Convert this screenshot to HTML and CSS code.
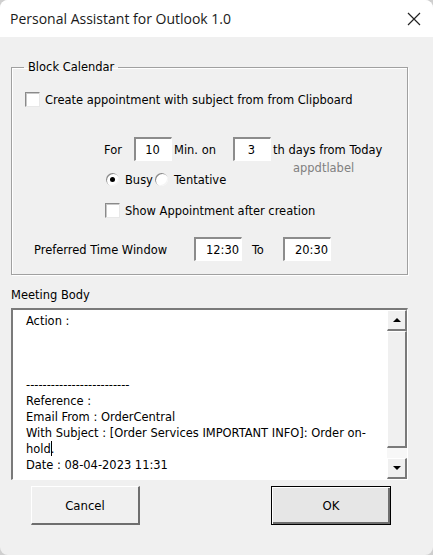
FILE: index.html
```html
<!DOCTYPE html>
<html lang="en">
<head>
    <meta charset="UTF-8">
    <meta name="viewport" content="width=device-width, initial-scale=1.0">
    <title>Personal Assistant for Outlook 1.0</title>
    <link rel="stylesheet" href="styles.css">
</head>
<body>
    <div class="window">
        <div class="titlebar">
            <span class="title">Personal Assistant for Outlook 1.0</span>
            <svg class="close" width="16" height="16" viewBox="0 0 16 16">
                <path d="M2 2 L14 14 M14 2 L2 14" stroke="#222" stroke-width="1.2" fill="none"/>
            </svg>
        </div>
        <div class="content">
            <fieldset class="frame">
                <legend>Block Calendar</legend>
                <div class="row row-clip">
                    <span class="check"></span>
                    <span>Create appointment with subject from from Clipboard</span>
                </div>
                <div class="row row-for">
                    <span class="lbl-for">For</span>
                    <span class="field small center">10</span>
                    <span class="lbl-min">Min. on</span>
                    <span class="field small center">3</span>
                    <span class="lbl-days">th days from Today</span>
                </div>
                <div class="row row-appdt">appdtlabel</div>
                <div class="row row-radio">
                    <span class="radio on"></span>
                    <span class="lbl-busy">Busy</span>
                    <span class="radio"></span>
                    <span class="lbl-tent">Tentative</span>
                </div>
                <div class="row row-show">
                    <span class="check"></span>
                    <span>Show Appointment after creation</span>
                </div>
                <div class="row row-time">
                    <span class="lbl-pref">Preferred Time Window</span>
                    <span class="field wide">12:30</span>
                    <span class="lbl-to">To</span>
                    <span class="field wide">20:30</span>
                </div>
            </fieldset>

            <div class="body-label">Meeting Body</div>
            <div class="memo">
                <div class="memo-text">
                    <div>Action :</div>
                    <div>&nbsp;</div>
                    <div>&nbsp;</div>
                    <div>&nbsp;</div>
                    <div>-------------------------</div>
                    <div>Reference :</div>
                    <div>Email From : OrderCentral</div>
                    <div>With Subject : [Order Services IMPORTANT INFO]: Order on-</div>
                    <div>hold<span class="caret"></span>.</div>
                    <div>Date : 08-04-2023 11:31</div>
                </div>
                <div class="scrollbar">
                    <div class="sb-btn"><span class="arrow up"></span></div>
                    <div class="sb-thumb"></div>
                    <div class="sb-track"></div>
                    <div class="sb-btn"><span class="arrow down"></span></div>
                </div>
            </div>

            <div class="buttons">
                <button type="button" class="btn cancel">Cancel</button>
                <button type="button" class="btn ok">OK</button>
            </div>
        </div>
    </div>
</body>
</html>
```

FILE: styles.css
```css
body {
    margin: 0;
    background-color: #cfcfcf;
}
.window {
    width: 433px;
    height: 555px;
    background-color: #f0f0f0;
    border-radius: 8px;
    overflow: hidden;
    font-family: "DejaVu Sans Condensed", "DejaVu Sans", sans-serif;
    font-size: 12.75px;
    color: #000;
}
.titlebar {
    height: 37px;
    background-color: #fff;
    display: flex;
    align-items: center;
    justify-content: space-between;
    padding: 0 11px 0 10px;
}
.title {
    font-family: "Open Sans", "Noto Sans", sans-serif;
    font-size: 14px;
    color: #1a1a1a;
}
.content {
    padding-top: 22px;
}
.frame {
    margin: 0 0 0 11px;
    padding: 0 0 13px 0;
    width: 397px;
    box-sizing: border-box;
    border: 1px solid #a0a0a0;
    box-shadow: inset 1px 1px 0 #fff, 1px 1px 0 #fff;
}
.frame legend {
    margin-left: 12px;
    padding: 0 4px;
    line-height: 16px;
}
.row {
    display: flex;
    align-items: center;
}
.row-clip {
    margin-top: 16px;
    height: 16px;
    padding-left: 13px;
}
.check {
    width: 13px;
    height: 13px;
    background-color: #fff;
    border: 1px solid;
    border-color: #8a8a8a #e8e8e8 #e8e8e8 #8a8a8a;
    box-shadow: inset 1px 1px 0 #c8c8c8;
    margin-right: 5px;
}
.row-for {
    margin-top: 30px;
    height: 24px;
    padding-left: 92px;
}
.lbl-for {
    width: 30px;
}
.lbl-min {
    width: 59px;
    padding-left: 2px;
}
.lbl-days {
    padding-left: 2px;
}
.field {
    height: 24px;
    box-sizing: border-box;
    background-color: #fff;
    border-style: solid;
    border-width: 2px 1px 1px 2px;
    border-color: #8c8c8c #fff #fff #8c8c8c;
    display: flex;
    align-items: center;
    justify-content: flex-end;
    padding-right: 2px;
}
.field.small {
    width: 38px;
}
.field.center {
    justify-content: center;
}
.field.wide {
    width: 48px;
}
.row-appdt {
    margin-top: -1px;
    height: 14px;
    padding-left: 281px;
    color: #808080;
}
.row-radio {
    margin-top: -3px;
    height: 16px;
    padding-left: 94px;
}
.radio {
    width: 13px;
    height: 13px;
    border-radius: 50%;
    background-color: #fff;
    box-shadow: inset 1px 1px 0 #8a8a8a, inset -1px -1px 0 #f4f4f4;
    display: flex;
    align-items: center;
    justify-content: center;
    margin-right: 6px;
}
.radio.on::after {
    content: "";
    width: 5px;
    height: 5px;
    border-radius: 50%;
    background-color: #000;
}
.lbl-busy {
    width: 30px;
}
.row-show {
    margin-top: 15px;
    height: 16px;
    padding-left: 93px;
}
.row-show .check {
    margin-right: 5px;
}
.row-time {
    margin-top: 19px;
    height: 24px;
    padding-left: 22px;
}
.lbl-pref {
    width: 160px;
}
.lbl-to {
    width: 31px;
    padding-left: 10px;
}
.body-label {
    margin: 12px 0 0 11px;
    line-height: 16px;
}
.memo {
    margin: 5px 0 0 11px;
    width: 397px;
    height: 172px;
    box-sizing: border-box;
    background-color: #fff;
    border-style: solid;
    border-width: 2px 1px 1px 2px;
    border-color: #7a7a7a #fff #fff #7a7a7a;
    display: flex;
}
.memo-text {
    flex: 1;
    padding: 3px 0 0 13px;
    line-height: 16px;
    white-space: nowrap;
}
.caret {
    display: inline-block;
    width: 1px;
    height: 15px;
    margin-right: -1px;
    background-color: #000;
    vertical-align: -3px;
}
.scrollbar {
    width: 20px;
    display: flex;
    flex-direction: column;
    background-color: #f0f0f0;
}
.sb-btn,
.sb-thumb {
    box-sizing: border-box;
    background-color: #f0f0f0;
    border-style: solid;
    border-width: 1px 2px 2px 1px;
    border-color: #fff #7a7a7a #7a7a7a #fff;
}
.sb-btn {
    height: 21px;
    display: flex;
    align-items: center;
    justify-content: center;
}
.sb-thumb {
    flex: 1;
}
.sb-track {
    height: 10px;
    background-color: #f7f7f7;
}
.arrow {
    width: 0;
    height: 0;
    border-left: 4px solid transparent;
    border-right: 4px solid transparent;
}
.arrow.up {
    border-bottom: 4px solid #000;
}
.arrow.down {
    border-top: 4px solid #000;
}
.buttons {
    display: flex;
    margin-top: 6px;
    padding-left: 31px;
}
.btn {
    height: 39px;
    font-family: inherit;
    font-size: 13px;
    color: #000;
    background-color: #f0f0f0;
    border-style: solid;
    border-width: 1px 2px 2px 1px;
    border-color: #fff #6e6e6e #6e6e6e #fff;
    padding: 0;
}
.cancel {
    width: 109px;
}
.ok {
    width: 120px;
    margin-left: 131px;
    background-color: #e6e6e6;
    border: 1px solid #000;
    box-shadow: inset 1px 1px 0 #fff, inset -2px -2px 0 #6e6e6e;
}
```
